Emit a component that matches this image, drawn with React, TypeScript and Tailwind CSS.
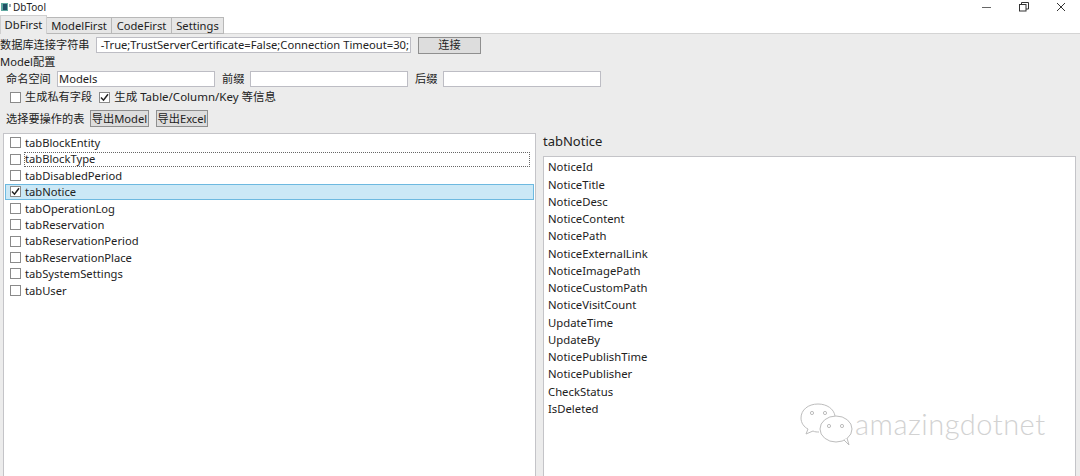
const font = "font-['Noto_Sans','Noto_Sans_CJK_SC',sans-serif]";

function Check({ checked }: { checked?: boolean }) {
  return (
    <span className="w-[11px] h-[11px] border border-[#8a8a8a] bg-white flex items-center justify-center shrink-0">
      {checked && (
        <svg width="9" height="9" viewBox="0 0 9 9" fill="none">
          <path d="M1 4.5 L3.5 7.2 L8 1.2" stroke="#222" strokeWidth="1.5" />
        </svg>
      )}
    </span>
  );
}

function Field({ value, className }: { value?: string; className: string }) {
  return (
    <div className={`h-[16px] bg-white border border-[#bdbdc4] overflow-hidden flex items-center px-[1px] leading-none whitespace-nowrap ${className}`}>
      <span className="shrink-0">{value}</span>
    </div>
  );
}

function Btn({ children, className }: { children: string; className: string }) {
  return (
    <div className={`h-[17px] bg-[#dddddd] border border-[#8f8f8f] flex items-center justify-center leading-none whitespace-nowrap ${className}`}>
      {children}
    </div>
  );
}

const tables = [
  "tabBlockEntity",
  "tabBlockType",
  "tabDisabledPeriod",
  "tabNotice",
  "tabOperationLog",
  "tabReservation",
  "tabReservationPeriod",
  "tabReservationPlace",
  "tabSystemSettings",
  "tabUser",
];

const columns = [
  "NoticeId",
  "NoticeTitle",
  "NoticeDesc",
  "NoticeContent",
  "NoticePath",
  "NoticeExternalLink",
  "NoticeImagePath",
  "NoticeCustomPath",
  "NoticeVisitCount",
  "UpdateTime",
  "UpdateBy",
  "NoticePublishTime",
  "NoticePublisher",
  "CheckStatus",
  "IsDeleted",
];

export default function App() {
  return (
    <div className={`${font} w-[1080px] h-[476px] overflow-hidden bg-[#ececec] text-[11.2px] text-[#222] relative flex flex-col`}>
      <div className="h-[34px] bg-white relative border-b border-[#d4d4d4] shrink-0">
        <div className="h-[14px] flex items-center pl-[1px] gap-[2px]">
          <svg width="10" height="10" viewBox="0 0 10 10">
            <rect x="0" y="1" width="7" height="8" fill="#5fa8a0" />
            <rect x="2" y="2" width="4" height="6" fill="#1f4f66" />
            <rect x="8" y="2" width="2" height="3" fill="#9aa7b0" />
          </svg>
          <span className="leading-none text-[10px]">DbTool</span>
          <div className="ml-auto flex items-center text-[#333]">
            <svg width="10" height="10" viewBox="0 0 10 10" className="mr-[27px]">
              <path d="M0 5.5 H9" stroke="#666" strokeWidth="1" />
            </svg>
            <svg width="10" height="10" viewBox="0 0 10 10" className="mr-[27px]">
              <rect x="0.5" y="2.5" width="6.5" height="6.5" fill="none" stroke="#333" strokeWidth="1" />
              <path d="M2.5 2.5 V0.5 H9.5 V7 H7" fill="none" stroke="#333" strokeWidth="1" />
            </svg>
            <svg width="10" height="10" viewBox="0 0 10 10" className="mr-[14px]">
              <path d="M1 1 L9 9 M9 1 L1 9" stroke="#333" strokeWidth="1" />
            </svg>
          </div>
        </div>
        <div className="absolute left-0 bottom-[-1px] flex items-end leading-none">
          <div className="h-[19px] w-[47px] bg-[#ececec] border border-b-0 border-[#cfcfcf] flex items-center justify-center">DbFirst</div>
          <div className="h-[17px] w-[65px] bg-[#e6e6e6] border border-l-0 border-[#b8b8b8] flex items-center justify-center">ModelFirst</div>
          <div className="h-[17px] w-[60px] bg-[#e6e6e6] border border-l-0 border-[#b8b8b8] flex items-center justify-center">CodeFirst</div>
          <div className="h-[17px] w-[52px] bg-[#e6e6e6] border border-l-0 border-[#b8b8b8] flex items-center justify-center">Settings</div>
        </div>
      </div>

      <div className="flex items-center h-[16px] mt-[3px] shrink-0">
        <span className="w-[96px] leading-none whitespace-nowrap">数据库连接字符串</span>
        <Field className="w-[315px] justify-end" value="-True;TrustServerCertificate=False;Connection Timeout=30;" />
        <Btn className="w-[63px] ml-[7px]">连接</Btn>
      </div>

      <div className="h-[16px] mt-[1px] flex items-center leading-none shrink-0">Model配置</div>

      <div className="flex items-center h-[16px] mt-[1px] pl-[6px] shrink-0">
        <span className="w-[51px] leading-none">命名空间</span>
        <Field className="w-[158px]" value="Models" />
        <span className="ml-[7px] w-[28px] leading-none">前缀</span>
        <Field className="w-[158px]" />
        <span className="ml-[7px] w-[28px] leading-none">后缀</span>
        <Field className="w-[158px]" />
      </div>

      <div className="flex items-center h-[18px] mt-[1px] pl-[10px] leading-none shrink-0">
        <Check />
        <span className="ml-[4px]">生成私有字段</span>
        <span className="ml-[7px]"><Check checked /></span>
        <span className="ml-[4px] text-[11.5px]">生成 Table/Column/Key 等信息</span>
      </div>

      <div className="flex items-center h-[17px] mt-[4px] pl-[6px] leading-none shrink-0">
        <span className="w-[84px]">选择要操作的表</span>
        <Btn className="w-[59px]">导出Model</Btn>
        <Btn className="w-[52px] ml-[7px]">导出Excel</Btn>
      </div>

      <div className="flex flex-1 min-h-0 mt-[6px] pl-[3px]">
        <div className="w-[533px] bg-white border border-[#c4c4c8] border-b-0 pt-[0.5px] px-[1px] flex flex-col shrink-0">
          {tables.map((t, i) => (
            <div
              key={t}
              className={`relative h-[16.4px] flex items-center pl-[5px] gap-[4px] leading-none shrink-0 ${
                t === "tabNotice" ? "bg-[#cbe8f6] outline outline-1 -outline-offset-1 outline-[#6db9e0]" : ""
              }`}
            >
              <Check checked={t === "tabNotice"} />
              <span>{t}</span>
              {i === 1 && (
                <span className="absolute left-[19px] right-[4px] top-[1px] bottom-0 border border-dotted border-[#666]" />
              )}
            </div>
          ))}
        </div>
        <div className="ml-[7px] w-[533px] flex flex-col">
          <div className="h-[23px] flex items-start text-[13px] leading-none pt-[2px]">tabNotice</div>
          <div className="flex-1 bg-white border border-[#c4c4c8] border-b-0 pt-[1.5px] pl-[4px] text-[11.3px]">
            {columns.map((c) => (
              <div key={c} className="h-[17.25px] flex items-center leading-none">{c}</div>
            ))}
          </div>
        </div>
      </div>

      <div className="absolute left-[800px] top-[403px] flex items-center">
        <svg width="54" height="44" viewBox="0 0 54 44" fill="none" stroke="#bdbdbd" strokeWidth="1">
          <path d="M18 1 C8 1 1 7 1 15 C1 20 4 24 8 26 L6 31 L13 28 C15 29 17 29 19 29" fill="#fff" />
          <path d="M18 1 C27 1 34 6 35 13" />
          <ellipse cx="36" cy="26" rx="16" ry="13" fill="#fff" />
          <path d="M44 37 L49 42 L47 35" fill="#fff" />
          <circle cx="12" cy="10" r="1.6" />
          <circle cx="25" cy="10" r="1.6" />
          <circle cx="29" cy="23" r="1.6" />
          <circle cx="42" cy="23" r="1.6" />
        </svg>
        <span className="ml-[1px] mt-[-3px] text-[29px] font-light leading-none text-[#d2d2d2] tracking-[0.5px] font-['Lato',sans-serif]">amazingdotnet</span>
      </div>
    </div>
  );
}
